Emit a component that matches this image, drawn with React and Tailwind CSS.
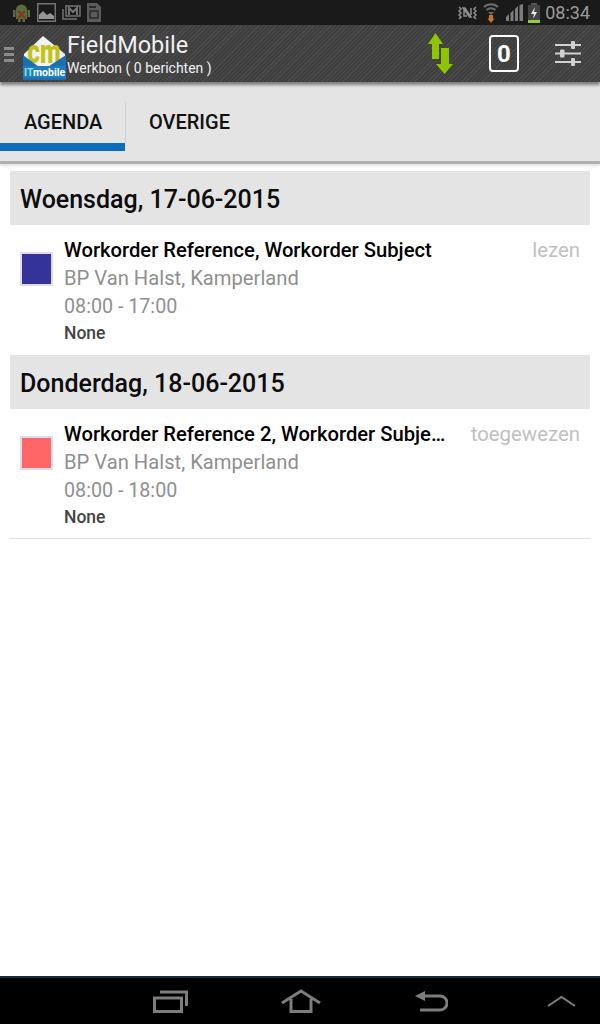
const days = [
  {
    date: 'Woensdag, 17-06-2015',
    title: 'Workorder Reference, Workorder Subject',
    status: 'lezen',
    time: '08:00 - 17:00',
    color: 'bg-[#333399]',
    last: false,
  },
  {
    date: 'Donderdag, 18-06-2015',
    title: 'Workorder Reference 2, Workorder Subject',
    status: 'toegewezen',
    time: '08:00 - 18:00',
    color: 'bg-[#ff6666]',
    last: true,
  },
];

function StatusLeft() {
  return (
    <div className="flex items-center pl-[13px]">
      <svg width="17" height="19" viewBox="0 0 17 19" className="opacity-70">
        <path d="M3 7a5.5 5.5 0 0 1 11 0v9H3z" fill="#71914a" />
        <rect x="0" y="7" width="2.5" height="7" fill="#71914a" />
        <rect x="14.5" y="7" width="2.5" height="7" fill="#71914a" />
        <rect x="5" y="16" width="2.5" height="3" fill="#71914a" />
        <rect x="9.5" y="16" width="2.5" height="3" fill="#71914a" />
        <path d="M5 8l7 7M12 8l-7 7" stroke="#c0392b" strokeWidth="2" />
      </svg>
      <svg width="19" height="19" viewBox="0 0 19 19" className="ml-[7px] opacity-70">
        <rect x="0.75" y="0.75" width="17.5" height="17.5" fill="none" stroke="#999" strokeWidth="1.5" />
        <path d="M2 16v-4l4-4 4 4 3-2 4 3v3z" fill="#ccc" />
      </svg>
      <svg width="19" height="15" viewBox="0 0 19 15" fill="none" stroke="#999" className="ml-[6px] opacity-70">
        <path d="M1 4v10h14" strokeWidth="1.5" />
        <rect x="4" y="1" width="14" height="10" strokeWidth="1.5" />
        <path d="M7 10V3l4 4 4-4v7" strokeWidth="2" />
      </svg>
      <svg width="14" height="19" viewBox="0 0 14 19" className="ml-[6px] opacity-70">
        <path d="M0 0h10l4 4v15H0z" fill="#777" />
        <rect x="3" y="8" width="8" height="7" fill="none" stroke="#333" strokeWidth="1.5" />
        <rect x="2" y="3" width="7" height="2" fill="#333" />
      </svg>
    </div>
  );
}

function StatusRight() {
  return (
    <div className="flex items-center pr-[10px]">
      <svg width="19" height="15" viewBox="0 0 19 15" fill="none" stroke="#8d8d8d" strokeWidth="1.5" className="mr-[6px]">
        <path d="M1 2l2 2-2 2 2 2-2 2 2 2-2 2M18 2l-2 2 2 2-2 2 2 2-2 2 2 2" />
        <path d="M5 3h2l6 9h-1.5zM6 5v6h3M13 3v7" />
      </svg>
      <svg width="16" height="21" viewBox="0 0 16 21" fill="none" className="mr-[7px]">
        <path d="M1 5a10 10 0 0 1 14 0M3.5 8a6.5 6.5 0 0 1 9 0" stroke="#6d6d6d" strokeWidth="2" />
        <path d="M5 10h6l-3 3z" fill="#6d6d6d" />
        <rect x="6" y="13" width="4" height="4" fill="#c9761f" />
        <path d="M4.5 16.5h7L8 21z" fill="#c9761f" />
      </svg>
      <svg width="17" height="17" viewBox="0 0 17 17" fill="#7c7c7c" className="mr-[5px]">
        <path d="M0 13l3-3v7H0zM4.5 9l3-3v11h-3zM9 5l3-3v15H9zM13.5 1L17 0v17h-3.5z" />
      </svg>
      <svg width="12" height="20" viewBox="0 0 12 20" className="mr-[5px]">
        <rect x="3" y="0" width="6" height="3" fill="#555" />
        <rect x="0" y="2" width="12" height="18" fill="#444" />
        <rect x="0" y="17" width="12" height="3" fill="#9acd32" />
        <path d="M7 4L3 11h3l-1 5 4-7H6z" fill="#eee" />
      </svg>
      <span className="text-[18px] leading-none text-[#9a9a9a]">08:34</span>
    </div>
  );
}

function Logo() {
  return (
    <svg width="43" height="45" viewBox="0 0 43 45">
      <path d="M1 19L20 1l22 18v12H1z" fill="#f2f4f4" />
      <text x="21" y="20" textAnchor="middle" fontSize="24" fontWeight="900" fontFamily="Roboto, sans-serif" fill="#c4c21a" transform="scale(1 1.4)">
        cm
      </text>
      <path d="M0 20l20 15 23-15v25H0z" fill="#1a6fb0" />
      <rect x="0" y="31" width="43" height="12" fill="#1f7cc0" />
      <text x="1" y="41" fontSize="10.5" fontWeight="700" fontFamily="Roboto, sans-serif">
        <tspan fill="#8fe0d8">IT</tspan>
        <tspan fill="#ffffff">mobile</tspan>
      </text>
    </svg>
  );
}

function ActionBar() {
  return (
    <div className="relative flex h-[57px] items-center bg-[#434343] bg-[repeating-linear-gradient(135deg,#4a4a4a_0px,#4a4a4a_1px,#3f3f3f_1px,#3f3f3f_3px)] shadow-[0_3px_3px_rgba(0,0,0,0.45)]">
      <div className="ml-[4px] mt-[2px] flex w-[10px] flex-col gap-[3px]">
        <div className="h-[3px] bg-[#8c8c8c]" />
        <div className="h-[3px] bg-[#8c8c8c]" />
        <div className="h-[3px] bg-[#8c8c8c]" />
      </div>
      <div className="ml-[9px] mt-[8px]">
        <Logo />
      </div>
      <div className="ml-[1px] flex flex-col text-[#f0f0f0]">
        <span className="text-[23.5px] leading-[28px]">FieldMobile</span>
        <span className="mt-[1px] text-[14px] leading-[17px]">Werkbon ( 0 berichten )</span>
      </div>
      <div className="ml-auto flex items-center">
        <svg width="25" height="41" viewBox="0 0 25 41" fill="#8fc400" className="mr-[36px]">
          <path d="M7.5 0L15 11h-4v15H4V11H0z" />
          <path d="M16.5 41L8 31h5V15h8v16h4z" />
        </svg>
        <div className="mr-[36px] flex h-[37px] w-[30px] items-center justify-center rounded-[4px] border-2 border-white text-[24px] font-bold leading-none text-white">
          0
        </div>
        <svg width="26" height="25" viewBox="0 0 26 25" fill="#d0d0d0" className="mr-[19px]">
          <rect x="0" y="3" width="26" height="2" />
          <rect x="0" y="11.5" width="26" height="2" />
          <rect x="0" y="20" width="26" height="2" />
          <rect x="16" y="0" width="4" height="8" rx="1" />
          <rect x="5" y="8.5" width="4.5" height="8" rx="1" />
          <rect x="16" y="17" width="4" height="8" rx="1" />
        </svg>
      </div>
    </div>
  );
}

function Tabs() {
  return (
    <div className="flex h-[82px] shrink-0 border-b-[3px] border-[#b0b0b0] bg-[#e4e4e4] shadow-[0_2px_3px_rgba(0,0,0,0.12)]">
      <div className="flex w-[125px] flex-col">
        <span className="mt-[29px] pl-[24px] text-[20px] font-medium leading-[22px] text-[#111]">AGENDA</span>
        <div className="mb-[10px] mt-auto h-[8px] bg-[#0f6cb6]" />
      </div>
      <div className="mt-[20px] h-[41px] w-px bg-[#d2d2d2]" />
      <span className="mt-[29px] pl-[23px] text-[20px] font-medium leading-[22px] text-[#111]">OVERIGE</span>
    </div>
  );
}

function Day({ day }) {
  return (
    <div>
      <div className="flex h-[54px] items-center bg-[#e4e4e4] pl-[10px] pt-[4px] text-[25px] font-medium text-[#0c0c0c]">
        {day.date}
      </div>
      <div className={`flex h-[130px] px-[10px] ${day.last ? 'border-b border-[#e2e2e2]' : ''}`}>
        <div className="mt-[27px] h-[34px] w-[33px] shrink-0 border-2 border-[#dcdcec]">
          <div className={`h-full w-full ${day.color}`} />
        </div>
        <div className="ml-[11px] flex min-w-0 flex-1 flex-col pt-[12px]">
          <div className="flex">
            <span className="w-[382px] truncate text-[20.2px] font-medium leading-[26px] text-black">{day.title}</span>
            <span className="ml-auto text-[20.4px] leading-[26px] text-[#c0c0c0]">{day.status}</span>
          </div>
          <span className="mt-[2px] text-[20.2px] leading-[26px] text-[#8f8f8f]">BP Van Halst, Kamperland</span>
          <span className="mt-[3px] text-[19.7px] leading-[26px] text-[#8f8f8f]">{day.time}</span>
          <span className="mt-[1px] text-[17.5px] font-medium leading-[24px] text-[#444]">None</span>
        </div>
      </div>
    </div>
  );
}

function NavBar() {
  return (
    <div className="flex h-[48px] shrink-0 items-center border-t-2 border-[#12303c] bg-black">
      <svg width="35" height="24" viewBox="0 0 35 24" fill="none" stroke="#7d7d7d" strokeWidth="3" className="ml-[153px]">
        <rect x="1.5" y="9" width="27" height="13.5" />
        <path d="M7 3h26.5v14" />
      </svg>
      <svg width="40" height="24" viewBox="0 0 40 24" fill="none" stroke="#7d7d7d" strokeWidth="3" className="ml-[93px]">
        <path d="M1 14L20 2l19 12" />
        <path d="M10 10v12.5h20V10" />
      </svg>
      <svg width="33" height="22" viewBox="0 0 33 22" fill="none" stroke="#7d7d7d" strokeWidth="3" className="ml-[94px]">
        <path d="M10 6h15a6.5 6.5 0 0 1 0 14H5" />
        <path d="M0 6l10-5v10z" fill="#7d7d7d" stroke="none" />
      </svg>
      <svg width="29" height="12" viewBox="0 0 29 12" fill="none" stroke="#7d7d7d" strokeWidth="2" className="ml-[99px]">
        <path d="M1 11L14.5 2 28 11" />
      </svg>
    </div>
  );
}

export default function App() {
  return (
    <div className="flex h-[1024px] w-[600px] flex-col overflow-hidden bg-white font-['Roboto',sans-serif]">
      <div className="flex h-[25px] shrink-0 items-center justify-between bg-[#1a1a1a]">
        <StatusLeft />
        <StatusRight />
      </div>
      <ActionBar />
      <Tabs />
      <div className="flex-1 px-[10px] pt-[7px]">
        {days.map((d) => (
          <Day key={d.date} day={d} />
        ))}
      </div>
      <NavBar />
    </div>
  );
}
